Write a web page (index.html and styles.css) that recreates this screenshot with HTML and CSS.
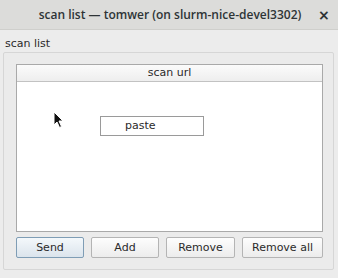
FILE: index.html
```html
<!DOCTYPE html>
<html lang="en">
<head>
    <meta charset="UTF-8">
    <title>scan list</title>
    <link rel="stylesheet" href="styles.css">
</head>
<body>
    <div class="titlebar">
        <span class="title">scan list — tomwer (on slurm-nice-devel3302)</span>
        <span class="close">×</span>
    </div>
    <div class="window">
        <div class="label">scan list</div>
        <div class="group">
            <div class="table">
                <div class="header">scan url</div>
                <div class="cells">
                    <div class="paste">paste</div>
                    <svg class="cursor" width="12" height="18" viewBox="0 0 12 18">
                        <path d="M1 1 L1 14 L4 11 L6.5 16.5 L8.5 15.5 L6 10 L10 10 Z" fill="#111" stroke="#fff" stroke-width="1"/>
                    </svg>
                </div>
            </div>
            <div class="buttons">
                <button class="btn focus">Send</button>
                <button class="btn">Add</button>
                <button class="btn">Remove</button>
                <button class="btn">Remove all</button>
            </div>
        </div>
    </div>
</body>
</html>
```

FILE: styles.css
```css
body {
    margin: 0;
    width: 338px;
    height: 278px;
    overflow: hidden;
    background-color: #ececec;
    font-family: "DejaVu Sans", sans-serif;
    font-size: 11px;
    color: #2a2a2a;
}

.titlebar {
    height: 30px;
    background-color: #dcdcda;
    border-bottom: 1px solid #cfcfcc;
    box-sizing: border-box;
    display: flex;
    align-items: center;
}

.title {
    flex: 1;
    text-align: center;
    padding-left: 26px;
    font-family: "Open Sans", sans-serif;
    font-weight: 600;
    font-size: 12px;
    color: #2e3436;
}

.close {
    width: 24px;
    margin-right: 0;
    text-align: left;
    font-weight: bold;
    font-size: 14px;
    color: #2e3436;
    padding-left: 4px;
    box-sizing: border-box;
}

.window {
    padding: 6px 4px 0 3px;
}

.label {
    padding-left: 2px;
    height: 16px;
    line-height: 16px;
}

.group {
    height: 218px;
    box-sizing: border-box;
    border: 1px solid #d6d6d6;
    border-radius: 2px;
    padding: 11px 10px 0 12px;
    background-color: #ebebeb;
}

.table {
    height: 168px;
    box-sizing: border-box;
    border: 1px solid #a9a9a9;
    background-color: #fff;
    display: flex;
    flex-direction: column;
}

.header {
    height: 17px;
    line-height: 16px;
    text-align: center;
    background: linear-gradient(#fbfbfb, #eeeeee);
    border-bottom: 1px solid #c2c2c2;
    box-sizing: border-box;
}

.cells {
    flex: 1;
    position: relative;
}

.paste {
    margin: 34px 0 0 83px;
    width: 104px;
    height: 20px;
    box-sizing: border-box;
    border: 1px solid #9a9a9a;
    padding-left: 24px;
    line-height: 18px;
}

.cursor {
    position: absolute;
    left: 36px;
    top: 29px;
}

.buttons {
    display: grid;
    grid-template-columns: 68px 68px 69px 1fr;
    gap: 7px;
    margin-top: 5px;
}

.btn {
    height: 21px;
    font-family: "DejaVu Sans", sans-serif;
    font-size: 11px;
    color: #2a2a2a;
    border: 1px solid #b4b4b4;
    border-radius: 2px;
    background: linear-gradient(#fdfdfd, #ececec);
    padding: 0;
}

.btn.focus {
    border-color: #7f9db5;
    background: linear-gradient(#f4f8fb, #dbe4ec);
}
```
